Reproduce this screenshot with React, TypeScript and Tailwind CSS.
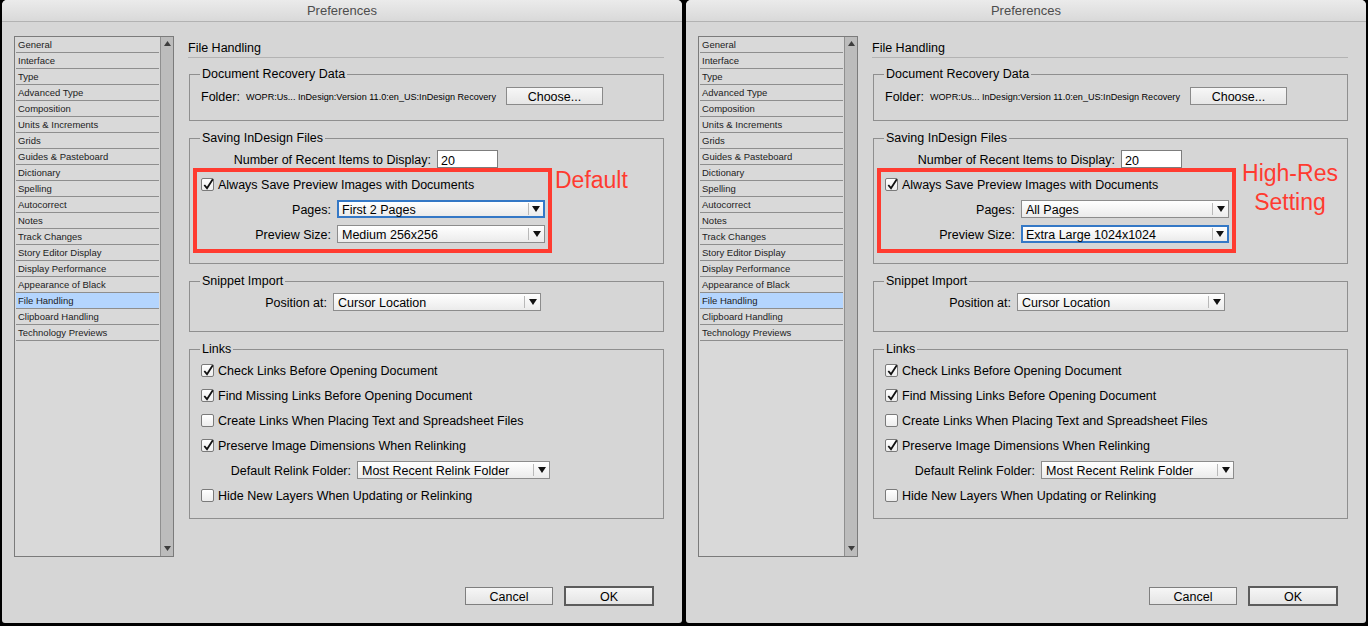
import React from 'react';
import clsx from 'clsx';

const sections = [
    'General',
    'Interface',
    'Type',
    'Advanced Type',
    'Composition',
    'Units & Increments',
    'Grids',
    'Guides & Pasteboard',
    'Dictionary',
    'Spelling',
    'Autocorrect',
    'Notes',
    'Track Changes',
    'Story Editor Display',
    'Display Performance',
    'Appearance of Black',
    'File Handling',
    'Clipboard Handling',
    'Technology Previews',
];

// label text sits a pixel low in the mac dialog
const label = 'pt-[2px] text-[12.5px] leading-[14px]';

function Triangle({ up }: { up?: boolean }) {
    return (
        <svg width="7" height="5" viewBox="0 0 7 5">
            <path d={up ? 'M0 5H7L3.5 0Z' : 'M0 0H7L3.5 5Z'} fill="#3d3d3d" />
        </svg>
    );
}

function Sidebar() {
    return (
        <div className="flex h-[521px] w-[160px] shrink-0 border border-[#7b7b7b] bg-[#d9d9d9]">
            <div className="flex-1 px-px">
                {sections.map((name) => (
                    <div
                        key={name}
                        className={clsx(
                            'h-[16px] border-b border-[#8e8e8e] pt-px pl-[2px] text-[9.5px] leading-[14px] text-[#1c1c1c]',
                            name === 'File Handling' && 'bg-[#b4d5fe]'
                        )}
                    >
                        {name}
                    </div>
                ))}
            </div>
            <div className="flex w-[13px] flex-col items-center justify-between border-l border-[#8f8f8f] bg-[#bcbcbc] pt-[4px] pb-[5px]">
                <Triangle up />
                <Triangle />
            </div>
        </div>
    );
}

function Group({ title, className, children }: { title: string; className?: string; children: React.ReactNode }) {
    return (
        <fieldset className={clsx('ml-px w-[475px] border border-[#8f8f8f]', className)}>
            <legend className="ml-[10px] px-[2px] text-[12.5px] leading-[15px]">{title}</legend>
            {children}
        </fieldset>
    );
}

function Select({ value, focused, className }: { value: string; focused?: boolean; className?: string }) {
    return (
        <div
            className={clsx(
                'flex h-[18px] items-center bg-linear-to-b from-white to-[#ebebeb]',
                focused ? 'border-2 border-[#3478c6]' : 'border border-[#8c8c8c]',
                className
            )}
        >
            <span className={clsx('flex-1 truncate', label, focused ? 'pl-[3px]' : 'pl-[4px]')}>{value}</span>
            <span className="h-[12px] w-px bg-[#b9b9b9]" />
            <span className={clsx('flex justify-center', focused ? 'w-[14px]' : 'w-[15px]')}>
                <svg width="8" height="6" viewBox="0 0 8 6">
                    <path d="M0 0H8L4 6Z" fill="#111" />
                </svg>
            </span>
        </div>
    );
}

function CheckBox({ checked }: { checked?: boolean }) {
    return (
        <span className="relative block h-[13px] w-[13px] shrink-0 rounded-[2px] border border-[#7a7a7a] bg-linear-to-b from-white to-[#ededed]">
            {checked && (
                <svg className="absolute -top-[2px] left-0" width="13" height="14" viewBox="0 0 13 14">
                    <path d="M2.3 8l2.7 3.2L10.8 2.2" fill="none" stroke="#111" strokeWidth="1.8" />
                </svg>
            )}
        </span>
    );
}

function CheckRow({ text, checked, className }: { text: string; checked?: boolean; className?: string }) {
    return (
        <div className={clsx('flex h-[18px] items-center', className)}>
            <CheckBox checked={checked} />
            <span className={clsx('ml-[4px]', label)}>{text}</span>
        </div>
    );
}

function Button({ text, primary }: { text: string; primary?: boolean }) {
    return (
        <button
            type="button"
            className={clsx(
                'flex items-center justify-center bg-linear-to-b from-[#f6f6f6] to-[#e4e4e4]',
                label,
                primary ? 'h-[20px] w-[90px] border-2 border-[#5c5c5c]' : 'h-[18px] w-[88px] border border-[#7f7f7f]'
            )}
        >
            {text}
        </button>
    );
}

type PaneProps = {
    pages: string;
    size: string;
    focus: 'pages' | 'size';
    note: React.ReactNode;
    noteClass: string;
};

function PrefWindow({ pages, size, focus, note, noteClass }: PaneProps) {
    return (
        <div className="flex h-[623px] w-[680px] flex-col overflow-hidden rounded-t-[5px] rounded-b-[3px] bg-[#d6d6d6]">
            <div className="flex h-[22px] shrink-0 items-center justify-center border-b border-[#b2b2b2] bg-linear-to-b from-[#ebebeb] to-[#d9d9d9] pt-px text-[13px] text-[#4d4d4d]">
                Preferences
            </div>

            <div className="flex flex-1 flex-col">
                <div className="flex pt-[14px] pl-[12px]">
                    <Sidebar />

                    <div className="ml-[14px] w-[476px]">
                        <div className="h-[22px] border-b border-[#b3b3b3] pt-[5px] text-[12.5px] leading-[15px]">
                            File Handling
                        </div>

                        {/* Document Recovery Data */}
                        <Group title="Document Recovery Data" className="mt-[9px] pb-[15px]">
                            <div className="mt-[5px] flex h-[18px] items-center pl-[11px]">
                                <span className={label}>Folder:</span>
                                <span className="ml-[6px] pt-px text-[9.1px] leading-[12px]">
                                    WOPR:Us... InDesign:Version 11.0:en_US:InDesign Recovery
                                </span>
                                <button
                                    type="button"
                                    className={clsx(
                                        'ml-[10px] flex h-[18px] w-[97px] items-center justify-center border border-[#8a8a8a] bg-linear-to-b from-[#f7f7f7] to-[#e6e6e6]',
                                        label
                                    )}
                                >
                                    Choose...
                                </button>
                            </div>
                        </Group>

                        {/* Saving InDesign Files */}
                        <Group title="Saving InDesign Files" className="mt-[10px] pb-[10px]">
                            <div className="mt-[4px] flex h-[18px] items-center">
                                <span className={clsx('w-[241px] text-right', label)}>
                                    Number of Recent Items to Display:
                                </span>
                                <div className="ml-[6px] h-[18px] w-[61px] border border-[#7d7d7d] bg-white pl-[3px] pt-[3px] text-[12.5px] leading-[14px]">
                                    20
                                </div>
                            </div>

                            <div className="flex items-start">
                                <div className="ml-[3px] w-[359px] border-4 border-[#ff3b30] pt-[4px] pb-[6px] pl-[4px]">
                                    <CheckRow text="Always Save Preview Images with Documents" checked className="!h-[16px]" />
                                    <div className="mt-[8px] flex items-center">
                                        <span className={clsx('w-[130px] text-right', label)}>Pages:</span>
                                        <Select value={pages} focused={focus === 'pages'} className="ml-[6px] w-[208px]" />
                                    </div>
                                    <div className="mt-[7px] flex items-center">
                                        <span className={clsx('w-[130px] text-right', label)}>Preview Size:</span>
                                        <Select value={size} focused={focus === 'size'} className="ml-[6px] w-[208px]" />
                                    </div>
                                </div>
                                <div className={clsx('text-[23px] leading-[29px] text-[#ff3b30]', noteClass)}>{note}</div>
                            </div>
                        </Group>

                        {/* Snippet Import */}
                        <Group title="Snippet Import" className="mt-[10px] pb-[20px]">
                            <div className="mt-[4px] flex items-center">
                                <span className={clsx('w-[137px] text-right', label)}>Position at:</span>
                                <Select value="Cursor Location" className="ml-[6px] w-[208px]" />
                            </div>
                        </Group>

                        {/* Links */}
                        <Group title="Links" className="mt-[10px] pb-[14px]">
                            <div className="mt-[4px] flex flex-col gap-[7px] pl-[11px]">
                                <CheckRow text="Check Links Before Opening Document" checked />
                                <CheckRow text="Find Missing Links Before Opening Document" checked />
                                <CheckRow text="Create Links When Placing Text and Spreadsheet Files" />
                                <CheckRow text="Preserve Image Dimensions When Relinking" checked />
                                <div className="-ml-[11px] flex items-center">
                                    <span className={clsx('w-[161px] text-right', label)}>Default Relink Folder:</span>
                                    <Select value="Most Recent Relink Folder" className="ml-[6px] w-[193px]" />
                                </div>
                                <CheckRow text="Hide New Layers When Updating or Relinking" />
                            </div>
                        </Group>
                    </div>
                </div>

                <div className="mt-auto flex items-center justify-end gap-[11px] pr-[28px] pb-[17px]">
                    <Button text="Cancel" />
                    <Button text="OK" primary />
                </div>
            </div>
        </div>
    );
}

export default function App() {
    return (
        <div className="flex h-[626px] w-[1368px] gap-[4px] overflow-hidden bg-black px-[2px] pb-[3px] font-['Liberation_Sans',Arial,sans-serif] text-black">
            <PrefWindow
                pages="First 2 Pages"
                size="Medium 256x256"
                focus="pages"
                note="Default"
                noteClass="ml-[3px] -mt-[2px]"
            />
            <PrefWindow
                pages="All Pages"
                size="Extra Large 1024x1024"
                focus="size"
                note={
                    <>
                        <span className="block">High-Res</span>
                        <span className="block">Setting</span>
                    </>
                }
                noteClass="ml-[4px] -mt-[9px] w-[100px] text-center"
            />
        </div>
    );
}
